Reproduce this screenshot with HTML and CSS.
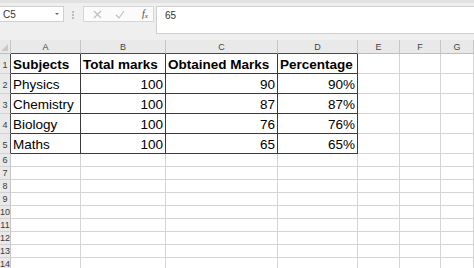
FILE: index.html
```html
<!DOCTYPE html>
<html>
<head>
<meta charset="utf-8">
<link rel="stylesheet" href="styles.css">
</head>
<body>
<div class="toolbar">
  <div class="namebox"><span class="ref">C5</span><span class="caret"></span></div>
  <div class="grip"></div>
  <div class="fxbox">
    <svg class="ico" width="9" height="9" viewBox="0 0 9 9"><path d="M1 1 L8 8 M8 1 L1 8" stroke="#bdbdbd" stroke-width="1.1" fill="none"/></svg>
    <svg class="ico" width="10" height="9" viewBox="0 0 10 9"><path d="M1 5 L4 8 L9 1" stroke="#bdbdbd" stroke-width="1.1" fill="none"/></svg>
    <span class="fx"><i>f</i><sub>x</sub></span>
  </div>
  <div class="formula">65</div>
</div>
<div class="sheet">
  <div class="corner"><span class="tri"></span></div>
  <div class="ch d">A</div><div class="ch d">B</div><div class="ch d">C</div><div class="ch d">D</div><div class="ch">E</div><div class="ch">F</div><div class="ch">G</div>

  <div class="rh d tall">1</div>
  <div class="c t b">Subjects</div><div class="c t b">Total marks</div><div class="c t b">Obtained Marks</div><div class="c t b">Percentage</div><div class="c"></div><div class="c"></div><div class="c"></div>

  <div class="rh d tall">2</div>
  <div class="c t">Physics</div><div class="c t r">100</div><div class="c t r">90</div><div class="c t r">90%</div><div class="c"></div><div class="c"></div><div class="c"></div>

  <div class="rh d tall">3</div>
  <div class="c t">Chemistry</div><div class="c t r">100</div><div class="c t r">87</div><div class="c t r">87%</div><div class="c"></div><div class="c"></div><div class="c"></div>

  <div class="rh d tall">4</div>
  <div class="c t">Biology</div><div class="c t r">100</div><div class="c t r">76</div><div class="c t r">76%</div><div class="c"></div><div class="c"></div><div class="c"></div>

  <div class="rh d tall">5</div>
  <div class="c t">Maths</div><div class="c t r">100</div><div class="c t r">65</div><div class="c t r">65%</div><div class="c"></div><div class="c"></div><div class="c"></div>

  <div class="rh">6</div><div class="c"></div><div class="c"></div><div class="c"></div><div class="c"></div><div class="c"></div><div class="c"></div><div class="c"></div>
  <div class="rh">7</div><div class="c"></div><div class="c"></div><div class="c"></div><div class="c"></div><div class="c"></div><div class="c"></div><div class="c"></div>
  <div class="rh">8</div><div class="c"></div><div class="c"></div><div class="c"></div><div class="c"></div><div class="c"></div><div class="c"></div><div class="c"></div>
  <div class="rh">9</div><div class="c"></div><div class="c"></div><div class="c"></div><div class="c"></div><div class="c"></div><div class="c"></div><div class="c"></div>
  <div class="rh">10</div><div class="c"></div><div class="c"></div><div class="c"></div><div class="c"></div><div class="c"></div><div class="c"></div><div class="c"></div>
  <div class="rh">11</div><div class="c"></div><div class="c"></div><div class="c"></div><div class="c"></div><div class="c"></div><div class="c"></div><div class="c"></div>
  <div class="rh">12</div><div class="c"></div><div class="c"></div><div class="c"></div><div class="c"></div><div class="c"></div><div class="c"></div><div class="c"></div>
  <div class="rh">13</div><div class="c"></div><div class="c"></div><div class="c"></div><div class="c"></div><div class="c"></div><div class="c"></div><div class="c"></div>
  <div class="rh">14</div><div class="c"></div><div class="c"></div><div class="c"></div><div class="c"></div><div class="c"></div><div class="c"></div><div class="c"></div>
</div>
</body>
</html>
```

FILE: styles.css
```css
* { box-sizing: border-box; margin: 0; padding: 0; }
html, body { width: 474px; height: 268px; overflow: hidden; background: #fff; }
body { font-family: "Liberation Sans", Arial, sans-serif; color: #000; }

.toolbar {
  display: flex;
  align-items: flex-start;
  height: 40px;
  background: #efefef;
  border-top: 3px solid #e2e2e2;
  padding-top: 3px;
}
.namebox {
  display: flex;
  align-items: center;
  justify-content: space-between;
  width: 64px;
  height: 16px;
  background: #fff;
  border: 1px solid #cfcfcf;
  border-left: none;
  padding: 0 4px 0 3px;
  font-size: 10px;
  color: #333;
}
.caret {
  width: 0; height: 0;
  border-left: 2px solid transparent;
  border-right: 2px solid transparent;
  border-top: 2px solid #666;
}
.grip {
  width: 2px;
  height: 8px;
  margin: 5px 9px 0 8px;
  border-left: 2px dotted #bcbcbc;
}
.fxbox {
  display: flex;
  align-items: center;
  width: 71px;
  height: 16px;
  background: #fbfbfb;
  border: 1px solid #d6d6d6;
  padding-left: 9px;
}
.ico { margin-right: 13px; }
.ico + .ico { margin-right: 17px; }
.fx {
  font-family: "Liberation Serif", serif;
  font-size: 10px;
  color: #444;
  line-height: 1;
}
.fx sub { font-size: 7px; vertical-align: -1px; font-style: italic; }
.formula {
  flex: 1;
  height: 28px;
  margin-left: 2px;
  background: #fff;
  border: 1px solid #cfcfcf;
  border-right: none;
  padding: 3px 0 0 8px;
  font-size: 10px;
  color: #333;
}

.sheet {
  display: grid;
  grid-template-columns: 11px 70px 85px 112px 80px 42px 41px 1fr;
  grid-template-rows: 14px repeat(5, 20px) repeat(9, 13px);
}
.corner {
  position: relative;
  background: #e9e9e9;
  border-right: 1px solid #c6c6c6;
  border-bottom: 1px solid #bdbdbd;
}
.tri {
  position: absolute;
  right: 2px;
  bottom: 2px;
  width: 0; height: 0;
  border-left: 7px solid transparent;
  border-bottom: 7px solid #c9c9c9;
}
.ch {
  background: #e9e9e9;
  border-right: 1px solid #c6c6c6;
  border-bottom: 1px solid #bdbdbd;
  font-size: 9px;
  color: #444;
  text-align: center;
  line-height: 13px;
  padding-top: 1px;
}
.rh {
  background: #e9e9e9;
  border-right: 1px solid #c6c6c6;
  border-bottom: 1px solid #d2d2d2;
  font-size: 9px;
  color: #3a3a3a;
  text-align: center;
  line-height: 12px;
  overflow: hidden;
  white-space: nowrap;
}
.rh.tall { line-height: 19px; padding-top: 2px; }
.ch.d { border-bottom-color: #4a4a4a; }
.rh.d { border-right-color: #4a4a4a; }

.c {
  border-right: 1px solid #d4d4d4;
  border-bottom: 1px solid #d4d4d4;
  white-space: nowrap;
  overflow: hidden;
}
.c.t {
  border-right-color: #3a3a3a;
  border-bottom-color: #3a3a3a;
  font-size: 13.5px;
  line-height: 17px;
  padding: 2px 2px 0 2px;
}
.c.b { font-weight: bold; }
.c.r { text-align: right; }
```
